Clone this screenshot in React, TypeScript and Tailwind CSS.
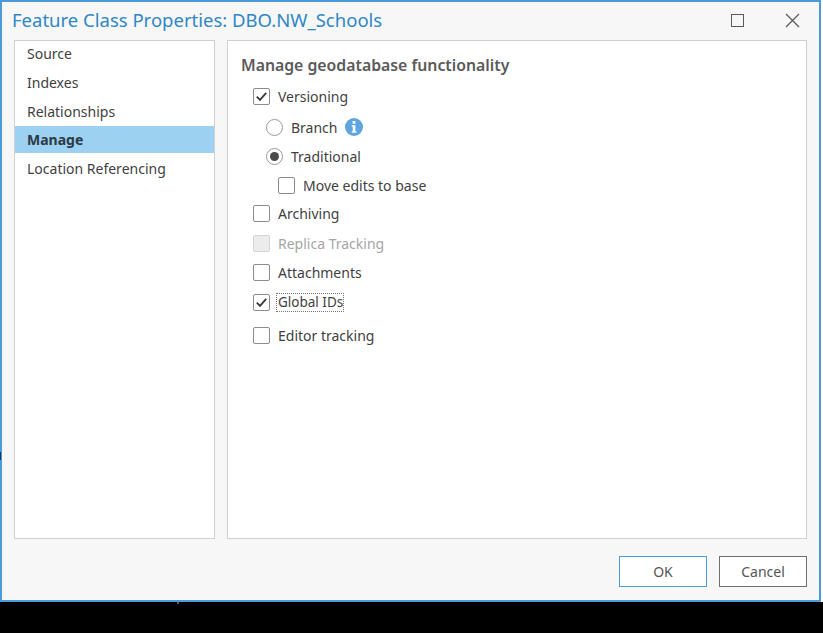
import { ReactNode } from "react";

function CheckBox({ checked = false, disabled = false }: { checked?: boolean; disabled?: boolean }) {
  return (
    <span
      className={`flex size-[17px] shrink-0 items-center justify-center rounded-[2px] border ${
        disabled ? "border-[#d4d4d4] bg-[#ececec]" : "border-[#8c8c8c] bg-white"
      }`}
    >
      {checked ? (
        <svg viewBox="0 0 13 13" className="size-[13px]" fill="none" stroke="#3c3c3c" strokeWidth="1.9">
          <path d="M1.8 6.6 L5 9.8 L11.2 2.9" />
        </svg>
      ) : null}
    </span>
  );
}

function Radio({ checked = false }: { checked?: boolean }) {
  return (
    <span className="flex size-[17px] shrink-0 items-center justify-center rounded-full border border-[#9a9a9a] bg-white">
      {checked ? <span className="size-[9px] rounded-full bg-[#4a4a4a]" /> : null}
    </span>
  );
}

function Row({ control, children, className }: { control: ReactNode; children: ReactNode; className: string }) {
  return (
    <div className={`flex h-[20px] items-center gap-[8px] ${className}`}>
      {control}
      {children}
    </div>
  );
}

export default function App() {
  const sections = ["Source", "Indexes", "Relationships", "Manage", "Location Referencing"];

  return (
    <div className="relative flex h-[633px] w-[823px] flex-col overflow-hidden bg-black font-['Noto_Sans',sans-serif] text-[14px] text-[#3f3f3f]">
      <div className="h-[602px] w-full bg-white">
        <div className="flex h-[602px] w-[821px] flex-col border-2 border-[#4a9bdc] bg-[#f7f7f7] pl-[12px] pr-[12px]">
          <div className="flex h-[38px] shrink-0 items-center justify-between pb-[2px]">
            <span className="-ml-[2px] text-[18.5px] text-[#2f87c6]">Feature Class Properties: DBO.NW_Schools</span>
            <div className="flex items-center gap-[41px] pr-[7px]">
              <span className="size-[13px] border-[1.5px] border-[#5a5a5a]" />
              <svg viewBox="0 0 15 15" className="size-[15px]" fill="none" stroke="#5a5a5a" strokeWidth="1.3">
                <path d="M1 1 L14 14 M14 1 L1 14" />
              </svg>
            </div>
          </div>

          <div className="flex h-[499px] shrink-0 gap-[12px]">
            <div className="w-[201px] border border-[#d0d0d0] bg-white">
              <div className="-mt-[1px] flex flex-col gap-[1.75px]">
                {sections.map((name) => (
                  <div
                    key={name}
                    className={`flex h-[27px] items-center pl-[12px] ${
                      name === "Manage" ? "bg-[#9dd1f1] font-bold text-[#2b3a45]" : ""
                    }`}
                  >
                    {name}
                  </div>
                ))}
              </div>
            </div>

            <div className="w-[580px] border border-[#d0d0d0] bg-white pl-[13px]">
              <div className="mt-[13px] flex h-[24px] items-center text-[15.8px] font-semibold text-[#5a5a5a]">
                Manage geodatabase functionality
              </div>
              <Row className="mt-[8px] ml-[12px]" control={<CheckBox checked />}>
                Versioning
              </Row>
              <Row className="mt-[11px] ml-[25px]" control={<Radio />}>
                <span>Branch</span>
                <svg viewBox="0 0 18 18" className="size-[18px]">
                  <circle cx="9" cy="9" r="9" fill="#5ea5de" />
                  <rect x="7.6" y="3" width="2.8" height="2.8" fill="#fff" />
                  <path d="M6.8 7.2 H10.4 V13.2 H11.4 V14.8 H6.8 V13.2 H7.8 V8.8 H6.8 Z" fill="#fff" />
                </svg>
              </Row>
              <Row className="mt-[9px] ml-[25px]" control={<Radio checked />}>
                Traditional
              </Row>
              <Row className="mt-[9px] ml-[37px]" control={<CheckBox />}>
                Move edits to base
              </Row>
              <Row className="mt-[8px] ml-[12px]" control={<CheckBox />}>
                Archiving
              </Row>
              <Row className="mt-[10px] ml-[12px]" control={<CheckBox disabled />}>
                <span className="text-[#a6a6a6]">Replica Tracking</span>
              </Row>
              <Row className="mt-[9px] ml-[12px]" control={<CheckBox />}>
                Attachments
              </Row>
              <Row className="mt-[10px] ml-[12px] !gap-[6px]" control={<CheckBox checked />}>
                <span className="flex h-[19px] items-center border border-dotted border-[#777] pl-[1px] pr-[0px] text-[13.5px]">
                  Global IDs
                </span>
              </Row>
              <Row className="mt-[13px] ml-[12px]" control={<CheckBox />}>
                Editor tracking
              </Row>
            </div>
          </div>

          <div className="flex flex-1 items-start justify-end gap-[12px] pt-[17px]">
            <button className="flex h-[31px] w-[88px] items-center justify-center border-[1.5px] border-[#4d9bd8] bg-white text-[#555]">
              OK
            </button>
            <button className="flex h-[31px] w-[88px] items-center justify-center border-[1.5px] border-[#6f6f6f] bg-white text-[#555]">
              Cancel
            </button>
          </div>
        </div>
      </div>
      <span className="absolute left-0 top-[452px] h-[8px] w-[1px] bg-[#1c3550]" />
      <span className="absolute left-[177px] top-[602px] h-[2px] w-[2px] bg-[#555]" />
    </div>
  );
}
